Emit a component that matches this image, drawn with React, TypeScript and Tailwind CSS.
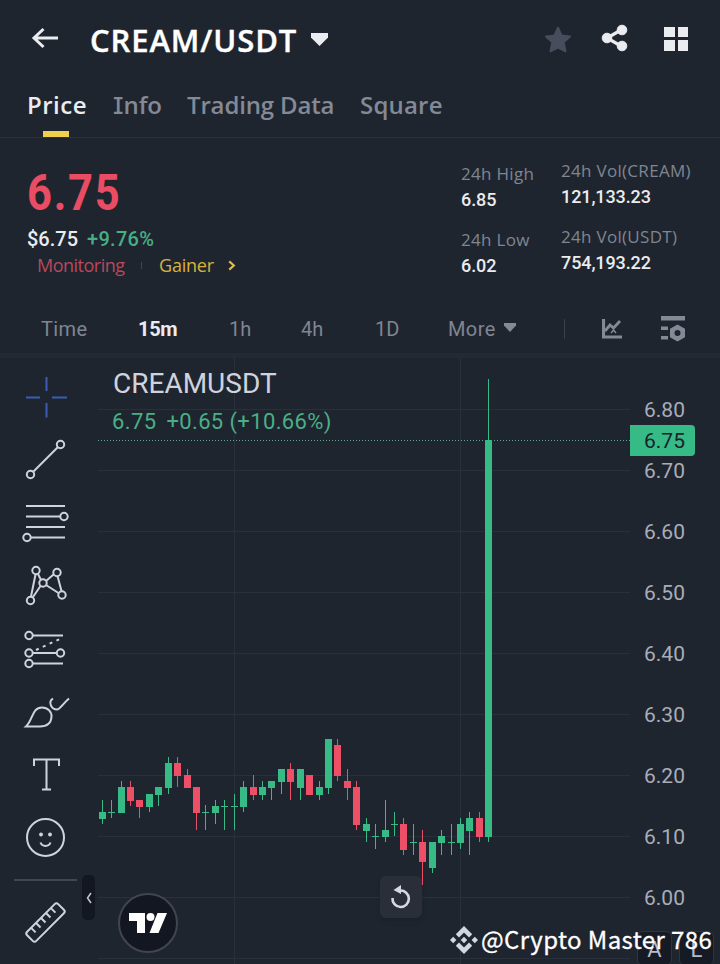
import React from "react";

type Candle = [x: number, up: boolean, open: number, close: number, high: number, low: number];

// Pixel rows of every candle: body top, body bottom, wick top, wick bottom
const candles: Candle[] = [
  [102, true, 812, 819, 800, 824],
  [111, true, 812, 813, 800, 818],
  [121, true, 787, 813, 781, 813],
  [130, false, 787, 801, 781, 806],
  [139, false, 800, 807, 800, 818],
  [149, true, 794, 807, 794, 812],
  [158, true, 787, 795, 787, 806],
  [168, true, 763, 788, 757, 794],
  [177, false, 763, 776, 757, 787],
  [187, false, 775, 788, 769, 788],
  [196, false, 787, 813, 787, 830],
  [205, true, 812, 813, 805, 830],
  [215, true, 806, 813, 800, 824],
  [224, true, 806, 807, 800, 830],
  [234, true, 806, 807, 794, 830],
  [243, true, 787, 807, 781, 812],
  [253, false, 787, 795, 775, 800],
  [262, true, 787, 795, 781, 800],
  [271, true, 781, 788, 781, 800],
  [281, true, 769, 782, 769, 794],
  [290, false, 769, 782, 763, 800],
  [300, true, 769, 788, 769, 800],
  [309, false, 775, 795, 775, 795],
  [319, true, 787, 795, 781, 800],
  [328, true, 739, 788, 739, 794],
  [337, false, 745, 776, 739, 781],
  [347, false, 781, 788, 769, 800],
  [356, false, 787, 825, 781, 830],
  [366, true, 824, 831, 818, 842],
  [375, true, 836, 837, 824, 849],
  [385, true, 830, 837, 800, 842],
  [394, true, 824, 825, 812, 836],
  [403, false, 824, 850, 818, 855],
  [413, true, 842, 843, 824, 855],
  [422, false, 842, 862, 830, 885],
  [432, true, 842, 868, 842, 873],
  [441, true, 836, 843, 830, 855],
  [451, true, 842, 843, 824, 855],
  [460, true, 824, 843, 818, 849],
  [469, true, 818, 831, 812, 855],
  [479, false, 818, 837, 812, 842],
  [488, true, 440, 837, 379, 842],
];

const gridRows = [409, 470, 531, 592, 653, 714, 775, 836, 897, 958];
const axisLabels = ["6.80", "6.70", "6.60", "6.50", "6.40", "6.30", "6.20", "6.10", "6.00"];

function Header() {
  return (
    <header className="flex h-[76px] items-center pl-[31px] pr-[31px]">
      <svg className="h-6 w-7" viewBox="0 0 28 24" fill="none" stroke="#eaecef" strokeWidth="3">
        <path d="M12.500 3 L3 12 L12.500 21 M3.500 12 H27" />
      </svg>
      <h1 className="ml-[31px] mt-[5px] w-[206px] whitespace-nowrap font-['Open_Sans'] text-[31px] font-semibold leading-none tracking-[0.9px] text-white [-webkit-text-stroke:0.4px_white]">
        CREAM/USDT
      </h1>
      <svg className="ml-[15px] mt-[3px] h-3.5 w-[17px]" viewBox="0 0 17 14" fill="#eaecef">
        <path d="M0 0H17V4.500L8.500 13L0 4.500Z" />
      </svg>
      <svg className="ml-auto mt-[3px] h-7 w-7" viewBox="0 0 28 28" fill="#474d5c" stroke="#474d5c" strokeWidth="2" strokeLinejoin="round">
        <path d="M14 1.700L17.500 9.500L26 10.500L19.700 16.200L21.500 25.300L14 21.500L6.500 25.300L8.300 16.200L2 10.500L10.500 9.500Z" />
      </svg>
      <svg className="ml-[29px] h-7 w-7" viewBox="0 0 28 28" fill="#eaecef" stroke="#eaecef">
        <path d="M20 6L6 14L20 22" fill="none" strokeWidth="3.200" />
        <circle cx="6" cy="14" r="4.800" />
        <circle cx="21" cy="6" r="4.800" />
        <circle cx="21" cy="22" r="4.800" />
      </svg>
      <div className="ml-[35px] mr-px mt-px grid grid-cols-2 gap-[3px]">
        {[0, 1, 2, 3].map((i) => (
          <span key={i} className="h-[10.500px] w-[10.500px] bg-[#eaecef]" />
        ))}
      </div>
    </header>
  );
}

function Tabs() {
  return (
    <nav className="flex h-[62px] items-start border-b border-[#2c323d] pl-[27px] pt-[13px] font-['Open_Sans'] text-2xl font-semibold leading-8 text-[#848996]">
      <div className="flex w-[86px] flex-col">
        <span className="w-[60px] whitespace-nowrap tracking-[0.5px] text-[#eaecef]">Price</span>
        <span className="ml-4 mt-[10px] h-1.5 w-[26px] bg-[#f0d04c]" />
      </div>
      <span className="w-[74px] whitespace-nowrap">
        <span className="font-[Inter] text-[23px] font-medium [font-feature-settings:'cv08']">I</span>nfo
      </span>
      <span className="w-[173px] whitespace-nowrap tracking-[-0.150px]">Trading Data</span>
      <span className="whitespace-nowrap tracking-[0.200px]">Square</span>
    </nav>
  );
}

function Stat({ label, value }: { label: string; value: string }) {
  return (
    <div className="h-[66px]">
      <div className="h-[26px] whitespace-nowrap font-['Open_Sans'] text-[17px] leading-[25px] tracking-[0.300px] text-[#7f8591]">{label}</div>
      <div className="h-[26px] whitespace-nowrap font-[Roboto] text-lg font-medium leading-[26px] tracking-[-0.100px] text-[#eaecef]">{value}</div>
    </div>
  );
}

function Summary() {
  return (
    <section className="flex h-[164px] pl-[27px]">
      <div className="w-[434px]">
        <div className="mt-[29px] h-[52px] origin-left scale-x-[0.870] font-[Roboto] text-[50px] font-bold leading-[52px] tracking-[2px] text-[#ea4d63]">6.75</div>
        <div className="mt-2 flex h-6 font-[Roboto] text-xl font-medium leading-6">
          <span className="w-[60px] text-[#eaecef]">$6.75</span>
          <span className="tracking-[0.300px] text-[#45b083]">+9.76%</span>
        </div>
        <div className="flex h-7 items-center pl-[10px] font-['Open_Sans'] text-lg">
          <span className="w-[104px] tracking-[-0.500px] text-[#b9485c]">Monitoring</span>
          <span className="h-[7px] w-px bg-[#41454f]" />
          <span className="ml-[17px] w-[69px] tracking-[-0.200px] text-[#d6b33e]">Gainer</span>
          <svg className="h-[11px] w-2" viewBox="0 0 8 12" fill="none" stroke="#e3bd3e" strokeWidth="2.300">
            <path d="M1 1.500L6 6L1 10.500" />
          </svg>
        </div>
      </div>
      <div className="w-[100px] pt-[23px]">
        <Stat label="24h High" value="6.85" />
        <Stat label="24h Low" value="6.02" />
      </div>
      <div className="pt-5">
        <Stat label="24h Vol(CREAM)" value="121,133.23" />
        <Stat label="24h Vol(USDT)" value="754,193.22" />
      </div>
    </section>
  );
}

function Intervals() {
  return (
    <div className="flex h-[56px] items-center border-b-[5px] border-[#242a35] pl-[41px] pt-[2px] font-[Roboto] text-[20px] text-[#7f8591]">
      <span className="w-[97px] tracking-[0.400px]">Time</span>
      <span className="w-[91px] font-bold tracking-[-0.300px] text-[#eaecef]">15m</span>
      <span className="w-[72px]">1h</span>
      <span className="w-[74px]">4h</span>
      <span className="w-[73px]">1D</span>
      <span className="w-[56px] tracking-[0.400px]">More</span>
      <svg className="mb-0.5 h-[9px] w-3" viewBox="0 0 12 9" fill="#848996">
        <path d="M0 0H12V2.500L6 9L0 2.500Z" />
      </svg>
      <span className="ml-[48px] h-5 w-px bg-[#3a404b]" />
      <svg className="ml-[37px] h-5 w-5" viewBox="0 0 20 20" fill="none" stroke="#848996">
        <path d="M1.500 0V18H20" strokeWidth="3.200" />
        <path d="M3 12L8 6L11.500 9L18 2" strokeWidth="2.800" />
        <path d="M9 14L11.500 11L14 14" strokeWidth="1.500" />
      </svg>
      <svg className="ml-[38px] h-[26px] w-[26px]" viewBox="0 0 26 26" fill="#848996">
        <path d="M1 0H25V4.500H1ZM1 10.500H8V14H1ZM1 20H8V23.500H1Z" />
        <path fillRule="evenodd" d="M17.500 8.500L25 12.700V21.300L17.500 25.500L10 21.300V12.700ZM17.500 14A3 3 0 1 0 17.500 20A3 3 0 1 0 17.500 14Z" />
      </svg>
    </div>
  );
}

function ToolIcons() {
  return (
    <svg className="h-[606px] w-[78px] shrink-0" viewBox="0 358 78 606" fill="none" stroke="#d0d3dc" strokeWidth="2">
      <path d="M46.500 377V391M46.500 403V417.500M26 397.500H40M52 397.500H67" stroke="#3d5cb5" />
      <g>
        <path d="M33 472L58 447" />
        <circle cx="30.500" cy="474.500" r="3.700" />
        <circle cx="60.500" cy="444.500" r="3.700" />
      </g>
      <g>
        <path d="M26 506H65M26 516.500H60M26 527H65M31 537.500H65" />
        <circle cx="64" cy="516.500" r="3.700" />
        <circle cx="27" cy="537.500" r="3.700" />
      </g>
      <g>
        <path d="M35.500 574.500L31 596.500M33 597L40.500 586M38 574L41 580M46 581L53.500 574.500M57.500 576L61.500 591M46 585L58.500 593" />
        <circle cx="36" cy="570.500" r="3.700" />
        <circle cx="57" cy="572.500" r="3.700" />
        <circle cx="43" cy="583" r="3.700" />
        <circle cx="30.500" cy="600.500" r="3.700" />
        <circle cx="62" cy="595" r="3.700" />
      </g>
      <g>
        <path d="M33 635.500H63M33 653H56M33 663.500H63" />
        <path d="M36 650L62 638" strokeDasharray="3 4.500" />
        <circle cx="29" cy="635.500" r="3.700" />
        <circle cx="29" cy="653" r="3.700" />
        <circle cx="60.500" cy="653" r="3.700" />
        <circle cx="29" cy="663.500" r="3.700" />
      </g>
      <path d="M26 726.500C33 720 32 707.500 42 707.500C48 707.500 52 712 51.500 717C51 723 47 726.500 40 726.500ZM53 698.500C47.500 702 51.500 709.500 57 709.500C60 709.500 63 703.500 69 698.500" />
      <path d="M34 766V759.500H59V766M46.500 759.500V789.500M42 789.500H51" />
      <circle cx="45.500" cy="837.500" r="18.500" />
      <path d="M40.500 842.500C42 847 49 847 50.500 842.500" />
      <g fill="#d0d3dc" stroke="none">
        <circle cx="41" cy="834.500" r="1.900" />
        <circle cx="50" cy="834.500" r="1.900" />
      </g>
      <path d="M14 880H77" stroke="#42464f" />
      <g transform="translate(45.500 922.500) rotate(-45)">
        <rect x="-22" y="-6.500" width="44" height="13" rx="2.500" />
        <path d="M-14 -6V0M-7 -6V0M0 -6V0M7 -6V0M14 -6V0" />
      </g>
    </svg>
  );
}

function Plot() {
  return (
    <div className="relative h-[606px] w-[532px] shrink-0">
      <svg className="block h-full w-full" viewBox="98 358 532 606" shapeRendering="crispEdges">
        {gridRows.map((y) => (
          <rect key={y} x="98" y={y} width="532" height="1" fill="#2a303b" />
        ))}
        <rect x="234" y="358" width="1" height="606" fill="#2a303b" />
        <rect x="460" y="358" width="1" height="606" fill="#2a303b" />
        <path d="M98 440.500H630" stroke="#5da88c" strokeDasharray="1 2" />
        {candles.map(([x, up, top, bottom, high, low]) => (
          <g key={x} fill={up ? "#36ba86" : "#ed4f66"}>
            <rect x={x} y={high} width="1" height={low - high} />
            <rect x={x - 3} y={top} width="7" height={bottom - top} />
          </g>
        ))}
      </svg>
      <div className="absolute left-[14px] top-[9px] whitespace-nowrap font-[Roboto]">
        <div className="pl-px text-[28px] leading-[34px] text-[#d0d3dc]">CREAMUSDT</div>
        <div className="mt-[7px] flex gap-[10px] text-[22px] leading-[28px] tracking-[0.370px] text-[#4aaf86]">
          <span>6.75</span>
          <span>+0.65 (+10.66%)</span>
        </div>
      </div>
      <div className="absolute left-[20px] top-[535px] flex h-[60px] w-[60px] items-center justify-center rounded-full border-2 border-[#42454f] bg-[#131722]">
        <svg className="h-5 w-[38px]" viewBox="0 0 38 20" fill="#fff">
          <path d="M0 0H16V20H8V8H0ZM28.500 0H38L29.500 20H20.500Z" />
          <circle cx="21.500" cy="4" r="4" />
        </svg>
      </div>
      <div className="absolute left-[282px] top-[518px] flex h-[42px] w-[42px] items-center justify-center rounded-md bg-[#2a2e39] shadow-md">
        <svg className="h-6 w-6" viewBox="0 0 24 24" fill="none" stroke="#d5d8e0" strokeWidth="2.600">
          <path d="M3.500 13A8.200 8.200 0 1 0 11 5.600" />
          <path d="M4.500 5L12 0V9Z" fill="#d5d8e0" stroke="none" />
        </svg>
      </div>
    </div>
  );
}

function Axis() {
  return (
    <div className="relative w-[90px] shrink-0 pt-[21px] font-[Roboto] text-[21px] text-[#a9adb8]">
      {axisLabels.map((label) => (
        <div key={label} className="h-[61px] pl-[14px] leading-[62px]">
          {label}
        </div>
      ))}
      <div className="absolute left-0 top-[67px] h-[31px] w-[65px] rounded-r bg-[#36ba86] pl-[14px] leading-[32px] text-[#17232b]">6.75</div>
      <div className="absolute left-[7px] top-[573px] flex gap-[7px] text-center text-[22px] leading-[35px] text-[#b7bbc6]">
        <span className="h-[35px] w-[35px] rounded-md border border-[#30343f] bg-[#161a25]">A</span>
        <span className="h-[35px] w-[35px] rounded-md border border-[#30343f] bg-[#161a25]">L</span>
      </div>
    </div>
  );
}

function Watermark() {
  return (
    <div className="absolute left-[450px] top-[922px] flex h-[34px] items-center text-white">
      <svg className="mt-0.5 h-7 w-7" viewBox="0 0 28 28" fill="#d3d7e0">
        <path d="M14 0L22.200 8.200L19 11.400L14 6.400L9 11.400L5.800 8.200ZM14 28L22.200 19.800L19 16.600L14 21.600L9 16.600L5.800 19.800ZM14 10.800L17.200 14L14 17.200L10.800 14ZM3.200 10.800L6.400 14L3.200 17.200L0 14ZM24.800 10.800L28 14L24.800 17.200L21.600 14Z" />
      </svg>
      <span className="ml-[3px] whitespace-nowrap font-['Noto_Sans_CJK_SC'] text-2xl leading-[34px] tracking-[0.400px] [-webkit-text-stroke:0.3px_white]">@Crypto Master 786</span>
    </div>
  );
}

export default function App() {
  return (
    <main className="relative flex h-[964px] w-[720px] flex-col overflow-hidden bg-[#1f252f]">
      <Header />
      <Tabs />
      <Summary />
      <Intervals />
      <div className="flex h-[606px] overflow-hidden">
        <ToolIcons />
        <div className="w-5 shrink-0 pt-[517px]">
          <div className="ml-1 flex h-[45px] w-[13px] items-center justify-center rounded-[5px] bg-[#131722]">
            <svg className="h-3 w-[6px]" viewBox="0 0 6 12" fill="none" stroke="#c4c7d0" strokeWidth="1.500">
              <path d="M5 1L1.500 6L5 11" />
            </svg>
          </div>
        </div>
        <Plot />
        <Axis />
      </div>
      <Watermark />
    </main>
  );
}
